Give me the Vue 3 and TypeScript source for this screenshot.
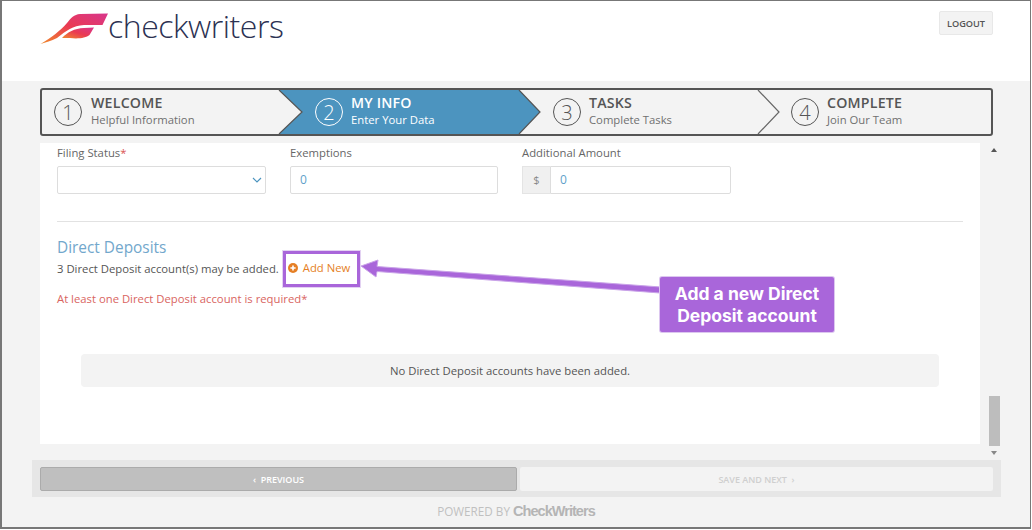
<script setup lang="ts">
interface Step { n: number; title: string; sub: string; active?: boolean }
const steps: Step[] = [
  { n: 1, title: 'WELCOME', sub: 'Helpful Information' },
  { n: 2, title: 'MY INFO', sub: 'Enter Your Data', active: true },
  { n: 3, title: 'TASKS', sub: 'Complete Tasks' },
  { n: 4, title: 'COMPLETE', sub: 'Join Our Team' },
]
</script>

<template>
  <div class="frame">
    <header class="top">
      <div class="logo">
        <svg class="feather" width="70" height="32" viewBox="0 0 70 32">
          <defs>
            <linearGradient id="fg" x1="0" y1="1" x2="1" y2="0">
              <stop offset="0" stop-color="#f08a2c" />
              <stop offset="0.5" stop-color="#ea3a52" />
              <stop offset="1" stop-color="#d8368c" />
            </linearGradient>
          </defs>
          <path fill="url(#fg)" d="M0.5 31 C12 24 20 18 27 10 C31 5 34 1.5 40 1 L68 0.5 L62.5 12 L44 12 C33 12.5 26 18 17 25 C11 28 6 29 0.5 31 Z" />
          <path fill="url(#fg)" d="M22 25 C28 19 34 15.5 44 15 L54 14.6 L49.5 22 C46 25 38 26 30 25 Z" />
        </svg>
        <span class="brand">checkwriters</span>
      </div>
      <button class="logout" type="button">LOGOUT</button>
    </header>

    <main class="body">
      <nav class="stepper">
        <svg class="step-shape" width="716" height="44" viewBox="0 0 716 44">
          <path d="M237 0 H477 L498 22 L477 44 H237 L260 22 Z" fill="#4c94bf" />
          <path d="M237 0 L260 22 L237 44" fill="none" stroke="#555" stroke-width="1.2" />
          <path d="M477 0 L498 22 L477 44" fill="none" stroke="#555" stroke-width="1.2" />
        </svg>
        <svg class="step-shape last" width="24" height="44" viewBox="0 0 24 44">
          <path d="M1 0 L22 22 L1 44" fill="none" stroke="#666" stroke-width="1.2" />
        </svg>
        <div v-for="s in steps" :key="s.n" class="step" :class="{ active: s.active }">
          <span class="num">{{ s.n }}</span>
          <span class="labels">
            <span class="title">{{ s.title }}</span>
            <span class="sub">{{ s.sub }}</span>
          </span>
        </div>
      </nav>

      <div class="viewport">
        <section class="panel">
          <div class="form-row">
            <div class="field">
              <label>Filing Status<em>*</em></label>
              <div class="input select">
                <svg width="10" height="6" viewBox="0 0 10 6"><path d="M1 1 L5 5 L9 1" fill="none" stroke="#4c94bf" stroke-width="1.2" /></svg>
              </div>
            </div>
            <div class="field second">
              <label>Exemptions</label>
              <div class="input">0</div>
            </div>
            <div class="field">
              <label>Additional Amount</label>
              <div class="group">
                <span class="addon">$</span>
                <div class="input">0</div>
              </div>
            </div>
          </div>
          <hr />
          <h2>Direct Deposits</h2>
          <p class="note">
            3 Direct Deposit account(s) may be added.
            <a class="add">
              <svg width="10" height="10" viewBox="0 0 10 10">
                <circle cx="5" cy="5" r="5" fill="#e57f25" />
                <path d="M5 2.4 V7.6 M2.4 5 H7.6" stroke="#fff" stroke-width="1.6" />
              </svg>
              Add New
            </a>
          </p>
          <p class="error">At least one Direct Deposit account is required*</p>
          <div class="well">No Direct Deposit accounts have been added.</div>
        </section>
        <aside class="scroll">
          <span class="arrow up"></span>
          <span class="thumb"></span>
          <span class="arrow down"></span>
        </aside>
      </div>

      <footer class="actions">
        <button class="prev" type="button">‹ &nbsp;PREVIOUS</button>
        <button class="next" type="button">SAVE AND NEXT &nbsp;›</button>
      </footer>
      <div class="powered">POWERED BY <b>CheckWriters</b></div>
    </main>

    <svg class="pointer" width="310" height="50" viewBox="0 0 310 50">
      <path d="M302 32 L18 11.5 L19 5 L2 11 L17 22 L18 16.5 L301 38 Z" fill="#a966da" stroke="#c9a3e8" stroke-width="1" />
    </svg>
    <div class="highlight"></div>
    <div class="callout">Add a new Direct<br />Deposit account</div>
  </div>
</template>

<style>
html, body { margin: 0; background: #fff; }
</style>

<style scoped>
.frame {
  position: relative;
  box-sizing: border-box;
  width: 1031px;
  height: 529px;
  border: 1px solid #777;
  border-left-width: 2px;
  border-bottom-width: 2px;
  font-family: "Open Sans", "Liberation Sans", sans-serif;
  color: #555;
  background: #f3f3f3;
  overflow: hidden;
  display: flex;
  flex-direction: column;
}
.top {
  height: 80px;
  flex: none;
  background: #fff;
  display: flex;
  justify-content: space-between;
  align-items: flex-start;
  padding: 11px 37px 0 38px;
  box-sizing: border-box;
}
.logo { display: flex; align-items: flex-start; }
.feather { margin-top: 1px; }
.brand {
  font-size: 32px;
  line-height: 28px;
  font-weight: 300;
  color: #2b3152;
  letter-spacing: -0.45px;
  margin-left: -2px;
}
.logout {
  margin-top: -1px;
  width: 54px;
  height: 24px;
  padding: 0;
  border: 1px solid #e8e8e8;
  border-radius: 2px;
  background: #f3f3f3;
  font: 600 9.2px "Open Sans", sans-serif;
  color: #555;
}
.body { flex: 1; display: flex; flex-direction: column; min-height: 0; }
.stepper {
  position: relative;
  box-sizing: border-box;
  margin: 7px 0 0 38px;
  width: 953px;
  height: 48px;
  flex: none;
  border: 2px solid #555;
  border-radius: 3px;
  display: grid;
  grid-template-columns: 261px 238px 238px 1fr;
  background: #f3f3f3;
}
.step-shape { position: absolute; left: 0; top: 0; }
.step-shape.last { left: 715px; }
.step {
  position: relative;
  display: flex;
  align-items: center;
  gap: 8px;
  padding-left: 12px;
  padding-bottom: 4px;
  color: #555;
}
.step:first-of-type { gap: 9px; }
.num {
  box-sizing: border-box;
  width: 28px;
  height: 28px;
  margin-top: 4px;
  border: 1.5px solid #555;
  border-radius: 50%;
  display: flex;
  align-items: center;
  justify-content: center;
  font-size: 20px;
  font-weight: 300;
  flex: none;
}
.labels { display: flex; flex-direction: column; }
.title { font-size: 14.2px; line-height: 18px; font-weight: 600; letter-spacing: 0.2px; }
.sub { font-size: 11.3px; line-height: 15px; color: #707070; }
.step.active, .step.active .sub { color: #fff; }
.step.active .num { border-color: #fff; }
.viewport {
  display: flex;
  margin: 7px 0 0 38px;
  height: 301px;
  flex: none;
}
.panel {
  width: 940px;
  box-sizing: border-box;
  background: #fff;
  padding: 0 17px;
  overflow: hidden;
  font-size: 11.3px;
}
.form-row { display: flex; gap: 24px; }
.field { width: 209px; }
.field.second { width: 208px; }
.field label { display: block; line-height: 20px; color: #666; font-size: 11.3px; padding-bottom: 3px; }
.field em { color: #d9534f; font-style: normal; }
.input {
  box-sizing: border-box;
  height: 28px;
  border: 1px solid #ddd;
  border-radius: 2px;
  padding-left: 9px;
  line-height: 26px;
  color: #5f9fca;
  background: #fff;
  font-size: 12px;
}
.select { display: flex; align-items: center; justify-content: flex-end; padding-right: 3px; }
.group { display: flex; }
.group .input { flex: 1; border-radius: 0 2px 2px 0; }
.addon {
  box-sizing: border-box;
  width: 28px;
  height: 28px;
  background: #f0f0f0;
  border: 1px solid #e4e4e4;
  border-right: 0;
  text-align: center;
  line-height: 26px;
  color: #888;
  font-size: 11px;
}
hr { border: 0; border-top: 1px solid #e2e2e2; margin: 27px 0 0; width: 906px; }
h2 { margin: 16px 0 0; font-size: 15.4px; font-weight: 400; line-height: 20px; color: #72a7cc; }
.note { margin: 0; line-height: 20px; color: #555; white-space: nowrap; }
.add { color: #e57f25; margin-left: 6px; display: inline-flex; align-items: center; gap: 5px; }
.error { margin: 10px 0 0; line-height: 20px; color: #d9655f; }
.well {
  margin: 45px 0 0 24px;
  width: 858px;
  height: 33px;
  background: #f3f3f3;
  border-radius: 4px;
  text-align: center;
  line-height: 33px;
  color: #555;
}
.scroll { position: relative; width: 21px; flex: none; }
.thumb {
  position: absolute;
  left: 9px;
  top: 253px;
  width: 11px;
  height: 50px;
  background: #bdbdbd;
}
.arrow {
  position: absolute;
  left: 11px;
  width: 0;
  height: 0;
  border-left: 3.5px solid transparent;
  border-right: 3.5px solid transparent;
}
.arrow.up { top: 5px; border-bottom: 4px solid #555; }
.arrow.down { top: 308px; border-top: 4px solid #888; }
.actions {
  margin: 16px 0 0 30px;
  width: 969px;
  height: 37px;
  box-sizing: border-box;
  padding: 7px 8px 6px;
  background: #e6e6e6;
  display: flex;
  gap: 3px;
  flex: none;
}
.actions button {
  height: 24px;
  padding: 0;
  border-radius: 2px;
  font: 600 9px "Open Sans", sans-serif;
}
.prev { width: 477px; background: #bfbfbf; border: 1px solid #ababab; color: #fff; }
.next { flex: 1; background: #f3f3f3; border: 0; color: #cfcfcf; }
.powered {
  text-align: center;
  margin-top: 2px;
  font-size: 11.7px;
  line-height: 24px;
  color: #c0c0c0;
}
.powered b {
  font-size: 14.5px;
  letter-spacing: -0.95px;
  color: #b5b5b5;
  font-family: "Liberation Sans", sans-serif;
}
.highlight {
  position: absolute;
  left: 281px;
  top: 250px;
  width: 77px;
  height: 36px;
  box-sizing: border-box;
  border: 3px solid #a966da;
  box-shadow: 0 0 0 1px #e3d2f2;
}
.pointer { position: absolute; left: 357px; top: 254px; }
.callout {
  position: absolute;
  left: 658px;
  top: 276px;
  width: 174px;
  height: 55px;
  box-sizing: border-box;
  background: #a966da;
  border-radius: 2px;
  box-shadow: 0 0 0 1px #dcc7ef;
  color: #fff;
  font: 700 17.5px/22px Inter, Roboto, sans-serif;
  text-align: center;
  padding-top: 6px;
}
</style>
